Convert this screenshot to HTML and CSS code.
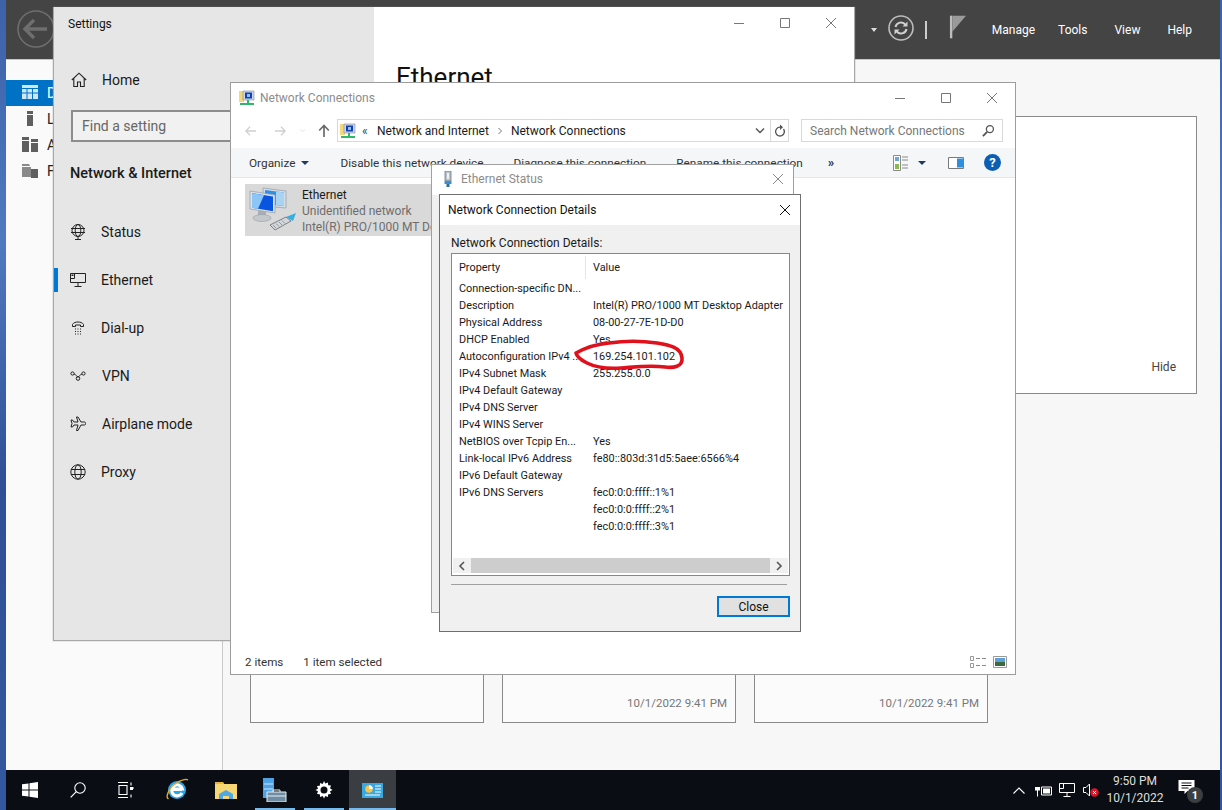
FILE: index.html
```html
<!DOCTYPE html>
<html lang="en">
<head>
<meta charset="utf-8">
<title>Network Connection Details</title>
<link rel="stylesheet" href="styles.css">
</head>
<body>
<div class="desktop">

  <section class="win sm">
    <header class="sm-head">
      <svg class="sm-back" viewBox="0 0 38 38"><circle cx="19" cy="19" r="18" fill="none" stroke="#6e6e6e" stroke-width="1.600"/><path d="M8 19h22M17 10l-9 9 9 9" fill="none" stroke="#6e6e6e" stroke-width="3.400"/></svg>
      <div class="sm-spacer"></div>
      <span class="sm-caret"></span>
      <svg class="sm-refresh" viewBox="0 0 26 26"><circle cx="13" cy="13" r="12" fill="none" stroke="#bdbdbd" stroke-width="1.600"/><path d="M7.500 12a5.600 5.600 0 0 1 10-2.200M18.500 14a5.600 5.600 0 0 1-10 2.200" fill="none" stroke="#d0d0d0" stroke-width="2"/><path d="M19.500 6.500v5h-5zM6.500 19.500v-5h5z" fill="#d0d0d0"/></svg>
      <span class="sm-divider"></span>
      <svg class="sm-flag" viewBox="0 0 18 24"><path d="M1 0h2.500v24H1z" fill="#bdbdbd"/><path d="M3.500 0H18L3.500 17z" fill="#9a9a9a"/></svg>
      <nav class="sm-menu"><span>Manage</span><span class="sm-tools">Tools</span><span>View</span><span>Help</span></nav>
    </header>
    <div class="sm-body">
      <aside class="sm-side">
        <div class="sm-item active">
          <svg viewBox="0 0 16 16"><path d="M0 0h16v3H0zM0 4h4.500v3.500H0zM5.500 4H10v3.500H5.500zM11 4h5v3.500h-5zM0 8.500h4.500V14H0zM5.500 8.500H10V14H5.500zM11 8.500h5V14h-5z" fill="#cfe6f7"/></svg><span>D</span>
        </div>
        <div class="sm-item"><svg viewBox="0 0 16 16"><path d="M5 0h6v3H5zM5 4h6v11H5z" fill="#5f5f5f"/></svg><span>L</span></div>
        <div class="sm-item"><svg viewBox="0 0 16 16"><path d="M0 0h7v3H0zM0 4h7v11H0zM9 2h7v3H9zM9 6h7v9H9z" fill="#5f5f5f"/></svg><span>A</span></div>
        <div class="sm-item"><svg viewBox="0 0 16 16"><path d="M0 1h7l1 2H0zM0 4h9v10H0z" fill="#8a8a8a"/><path d="M9 6h7v9H9z" fill="#5f5f5f"/></svg><span>F</span></div>
      </aside>
      <main class="sm-main">
        <div class="sm-panel"><span>Hide</span></div>
        <div class="sm-cards">
          <div class="sm-card"></div>
          <div class="sm-card"><span>10/1/2022 9:41 PM</span></div>
          <div class="sm-card"><span>10/1/2022 9:41 PM</span></div>
        </div>
      </main>
    </div>
  </section>

  <section class="win settings">
    <aside class="set-side">
      <div class="set-title">Settings</div>
      <div class="set-home">
        <svg class="set-ico" viewBox="0 0 16 16"><path d="M.8 8 8 1.200 15.200 8M2.800 6.500V14.500h3.700v-4.500h3v4.500h3.700V6.500" fill="none" stroke="#222" stroke-width="1.100"/></svg>
        <span>Home</span>
      </div>
      <div class="set-search">Find a setting</div>
      <div class="set-group">Network &amp; Internet</div>
      <ul class="set-list">
        <li><svg class="set-ico" viewBox="0 0 16 16"><g fill="none" stroke="#222" stroke-width="1"><circle cx="8" cy="6.500" r="6"/><ellipse cx="8" cy="6.500" rx="2.800" ry="6"/><path d="M1 4.500h14M1 8.500h14M8 12.500v3M5 15.500h6"/></g></svg><span>Status</span></li>
        <li class="cur"><svg class="set-ico" viewBox="0 0 16 16"><g fill="none" stroke="#222" stroke-width="1"><path d="M.5 1.500h15v9H.5zM8 10.500v4M4.500 14.500h7M.5 6.500h4v-5"/></g><path d="M1.500 2.500h2v1.500h-2z" fill="#222"/></svg><span>Ethernet</span></li>
        <li><svg class="set-ico" viewBox="0 0 16 16"><g fill="none" stroke="#222" stroke-width="1"><path d="M2.500 6.500V4.500C3.500 2.500 6 2 8 2s4.500.500 5.500 2.500v2h-3V5h-5v1.500z"/></g><path d="M5 8.500h1v1H5zM7.500 8.500h1v1h-1zM10 8.500h1v1h-1zM5 11h1v1H5zM7.500 11h1v1h-1zM10 11h1v1h-1zM5 13.500h1v1H5zM7.500 13.500h1v1h-1zM10 13.500h1v1h-1z" fill="#222"/></svg><span>Dial-up</span></li>
        <li><svg class="set-ico" viewBox="0 0 16 16"><g fill="none" stroke="#222" stroke-width="1"><circle cx="2.500" cy="5.500" r="1.600"/><circle cx="13.500" cy="5.500" r="1.600"/><circle cx="8" cy="10.500" r="1.800"/><path d="M4 6c2 0 2.500 3 4 3M12 6c-2 0-2.500 3-4 3"/></g></svg><span class="shift">VPN</span></li>
        <li><svg class="set-ico" viewBox="0 0 16 16"><path d="M6.500 1h1.500l3 5h3.500c1.500 0 1.500 3 0 3H11l-3 5.500H6.500L8 9H4l-1.500 2H1L2 7.500 1 4h1.500L4 6h4z" fill="none" stroke="#222" stroke-width="1"/></svg><span class="shift">Airplane mode</span></li>
        <li><svg class="set-ico" viewBox="0 0 16 16"><g fill="none" stroke="#222" stroke-width="1"><circle cx="8" cy="8" r="7.200"/><ellipse cx="8" cy="8" rx="3.200" ry="7.200"/><path d="M1.200 5.500h13.600M1.200 10.500h13.600"/></g></svg><span>Proxy</span></li>
      </ul>
    </aside>
    <div class="set-content">
      <div class="win-btns set-btns">
        <svg viewBox="0 0 12 12"><path d="M1 6.500h10" stroke="#777" fill="none"/></svg>
        <svg viewBox="0 0 12 12"><path d="M1.500 1.500h9v9h-9z" stroke="#777" fill="none"/></svg>
        <svg viewBox="0 0 12 12"><path d="M1 1l10 10M11 1 1 11" stroke="#777" fill="none"/></svg>
      </div>
      <h1 class="set-h1">Ethernet</h1>
    </div>
  </section>

  <section class="win netcon">
    <div class="nc-title">
      <svg class="ico16" viewBox="0 0 16 16"><path d="M0 1h7l1 1.500h-3V12H0z" fill="#f3d97a"/><path d="M4 1h11v9H4z" fill="#cfd8e6" stroke="#7c8794" stroke-width=".6"/><path d="M6 2.500h7v6H6z" fill="#123fb5"/><path d="M8 4h3v3H8z" fill="#8fc4f5"/><path d="M8 10h2v3H8zM1 13h14v2H1z" fill="#2fb86c"/></svg>
      <span>Network Connections</span>
      <div class="win-btns nc-btns">
        <svg viewBox="0 0 12 12"><path d="M1 6.500h10" stroke="#777" fill="none"/></svg>
        <svg viewBox="0 0 12 12"><path d="M1.500 1.500h9v9h-9z" stroke="#777" fill="none"/></svg>
        <svg viewBox="0 0 12 12"><path d="M1 1l10 10M11 1 1 11" stroke="#777" fill="none"/></svg>
      </div>
    </div>
    <div class="nc-addr">
      <svg class="nav-a" viewBox="0 0 14 12"><path d="M13 6H2M6.500 1.500 2 6l4.500 4.500" fill="none" stroke="#d0d0d0" stroke-width="1.400"/></svg>
      <svg class="nav-b" viewBox="0 0 14 12"><path d="M1 6h11M7.500 1.500 12 6l-4.500 4.500" fill="none" stroke="#d0d0d0" stroke-width="1.400"/></svg>
      <svg class="nav-c" viewBox="0 0 8 6"><path d="M1 1.500 4 4.500 7 1.500" fill="none" stroke="#dcdcdc" stroke-width="1"/></svg>
      <svg class="nav-d" viewBox="0 0 12 14"><path d="M6 13V2M1.200 6.500 6 1.500l4.800 5" fill="none" stroke="#6b6b6b" stroke-width="1.700"/></svg>
      <div class="addr-box">
        <svg class="ico16" viewBox="0 0 16 16"><path d="M0 1h7l1 1.500h-3V12H0z" fill="#f3d97a"/><path d="M4 1h11v9H4z" fill="#cfd8e6" stroke="#7c8794" stroke-width=".6"/><path d="M6 2.500h7v6H6z" fill="#123fb5"/><path d="M8 4h3v3H8z" fill="#8fc4f5"/><path d="M8 10h2v3H8zM1 13h14v2H1z" fill="#2fb86c"/></svg>
        <span class="crumb-more">«</span>
        <span>Network and Internet</span>
        <svg class="crumb-sep" viewBox="0 0 6 8"><path d="M1.500 1 4.500 4 1.500 7" fill="none" stroke="#777" stroke-width="1"/></svg>
        <span>Network Connections</span>
        <svg class="addr-drop" viewBox="0 0 10 7"><path d="M1 1.500 5 5.500 9 1.500" fill="none" stroke="#555" stroke-width="1.400"/></svg>
        <span class="addr-refresh"><svg viewBox="0 0 12 14"><path d="M9.500 5a4.400 4.400 0 1 1-3.500-1.800H8" fill="none" stroke="#555" stroke-width="1.300"/><path d="M6 .500v5.500L9 3.200z" fill="#555"/></svg></span>
      </div>
      <div class="search-box">
        <span>Search Network Connections</span>
        <svg viewBox="0 0 14 14"><circle cx="8.500" cy="5.500" r="3.800" fill="none" stroke="#555" stroke-width="1.400"/><path d="M5.500 8.500 1 13" stroke="#555" stroke-width="2"/></svg>
      </div>
    </div>
    <div class="nc-cmd">
      <span class="cmd-org">Organize<i class="caret"></i></span>
      <span class="cmd-a">Disable this network device</span>
      <span class="cmd-b">Diagnose this connection</span>
      <span class="cmd-c">Rename this connection</span>
      <span class="cmd-more">»</span>
      <div class="cmd-right">
        <svg class="cmd-view" viewBox="0 0 15 16"><path d="M.5.500h7v15h-7z" fill="#fff" stroke="#8a8a8a"/><path d="M2 2h4v4H2z" fill="#6fa6d8"/><path d="M2 9h4v5H2z" fill="#8cb84f"/><path d="M9 2h6M9 5h6M9 10h6M9 13h6" stroke="#8a8a8a"/></svg>
        <i class="caret navy"></i>
        <svg class="cmd-pane" viewBox="0 0 16 12"><path d="M.5.500h15v11H.500z" fill="#fff" stroke="#7a7a7a"/><path d="M9 1.500h6v9H9z" fill="#2e8fe0"/></svg>
        <span class="help">?</span>
      </div>
    </div>
    <div class="nc-files">
      <div class="file sel">
        <svg class="file-ico" viewBox="0 0 48 48">
          <path d="M14 2l23 3v17l-23-2z" fill="#d6dde4" stroke="#98a3ad" stroke-width=".8"/>
          <path d="M16 4l19 2.500v13.500l-19-2z" fill="#2f8fe8"/>
          <path d="M27 5.500l8 1v13.500l-8-1z" fill="#a9d3f5"/>
          <path d="M1 5l25 4v18L1 23z" fill="#dce2e8" stroke="#98a3ad" stroke-width=".8"/>
          <path d="M3 7.200l21 3.400v14.600L3 21.800z" fill="#0a55e0"/>
          <path d="M3 7.200l12 2-6 13.600-6-1z" fill="#8cc6f8"/>
          <path d="M9 25h8v5H9z" fill="#a8aeb4"/>
          <ellipse cx="13" cy="32" rx="9" ry="3.500" fill="#c3c8cd" stroke="#9aa0a6" stroke-width=".6"/>
          <path d="M21 39l16-8 5 4-16 9z" fill="#d4d8dc" stroke="#6f767c" stroke-width=".9"/>
          <path d="M24 39l3 3M27 37.500l3 3M30 36l3 3M33 34.500l3 3" stroke="#7d848a" stroke-width=".8"/>
          <path d="M37 31l10-4-3 8z" fill="#35aee2"/>
        </svg>
        <div class="file-text"><b>Ethernet</b><span>Unidentified network</span><span>Intel(R) PRO/1000 MT Desktop Adapter</span></div>
      </div>
    </div>
    <footer class="nc-status">
      <span>2 items</span><span class="sep-sel">1 item selected</span>
      <div class="status-ico">
        <svg viewBox="0 0 17 12"><path d="M.5.500h3v4h-3zM.5 7.500h3v4h-3z" fill="#fff" stroke="#999"/><path d="M6 2.500h4M12 2.500h4M6 9.500h4M12 9.500h4" stroke="#888"/></svg>
        <svg viewBox="0 0 14 12"><path d="M.5.500h13v11H.500z" fill="#fff" stroke="#999"/><path d="M2 2h10v4H2z" fill="#5d9fdb"/><path d="M2 6h10v4H2z" fill="#3c6a3e"/></svg>
      </div>
    </footer>
  </section>

  <section class="win status">
    <div class="st-title">
      <svg class="st-ico" viewBox="0 0 10 16"><path d="M2 0h6v10H2z" fill="#b8c2cc" stroke="#6d7780" stroke-width=".8"/><path d="M4 2h2v6H4z" fill="#eef2f5"/><path d="M1.500 10h7v3h-7z" fill="#3f8fd0"/><path d="M3.500 13h3v3h-3z" fill="#2b6ca3"/></svg>
      <span>Ethernet Status</span>
      <svg class="st-x" viewBox="0 0 12 12"><path d="M1 1l10 10M11 1 1 11" stroke="#888" fill="none"/></svg>
    </div>
  </section>

  <section class="win details">
    <div class="dt-title">
      <span>Network Connection Details</span>
      <svg viewBox="0 0 12 12"><path d="M1 1l10 10M11 1 1 11" stroke="#111" stroke-width="1" fill="none"/></svg>
    </div>
    <div class="dt-body">
      <div class="dt-label">Network Connection Details:</div>
      <div class="dt-list">
        <div class="dt-head"><span class="h-prop">Property</span><span class="h-val">Value</span></div>
        <div class="dt-rows">
          <div class="row"><span>Connection-specific DN...</span><span></span></div>
          <div class="row"><span>Description</span><span>Intel(R) PRO/1000 MT Desktop Adapter</span></div>
          <div class="row"><span>Physical Address</span><span>08-00-27-7E-1D-D0</span></div>
          <div class="row"><span>DHCP Enabled</span><span>Yes</span></div>
          <div class="row"><span>Autoconfiguration IPv4 ...</span><span>169.254.101.102</span></div>
          <div class="row"><span>IPv4 Subnet Mask</span><span>255.255.0.0</span></div>
          <div class="row"><span>IPv4 Default Gateway</span><span></span></div>
          <div class="row"><span>IPv4 DNS Server</span><span></span></div>
          <div class="row"><span>IPv4 WINS Server</span><span></span></div>
          <div class="row"><span>NetBIOS over Tcpip En...</span><span>Yes</span></div>
          <div class="row"><span>Link-local IPv6 Address</span><span>fe80::803d:31d5:5aee:6566%4</span></div>
          <div class="row"><span>IPv6 Default Gateway</span><span></span></div>
          <div class="row"><span>IPv6 DNS Servers</span><span>fec0:0:0:ffff::1%1</span></div>
          <div class="row"><span></span><span>fec0:0:0:ffff::2%1</span></div>
          <div class="row"><span></span><span>fec0:0:0:ffff::3%1</span></div>
        </div>
        <div class="dt-scroll">
          <svg viewBox="0 0 8 10"><path d="M6 1 2 5l4 4" fill="none" stroke="#555" stroke-width="1.600"/></svg>
          <span class="thumb"></span>
          <svg viewBox="0 0 8 10"><path d="M2 1l4 4-4 4" fill="none" stroke="#555" stroke-width="1.600"/></svg>
        </div>
      </div>
      <hr class="dt-rule">
      <div class="dt-actions"><button class="dt-close" type="button">Close</button></div>
    </div>
  </section>

  <svg class="ink" viewBox="0 0 120 40"><path d="M3 16C12 11 24 7 36 6 50 4 70 4 84 6 96 8 108 10 109 21 110 30 100 31 92 30 76 28 62 30 48 31 34 32 22 30 14 26 8 23 4 20 3 16" fill="none" stroke="#e0101c" stroke-width="3.600" stroke-linecap="round"/></svg>

  <footer class="taskbar">
    <svg class="tb-start" viewBox="0 0 16 16"><path d="M0 2.300 6.500 1.400v6.100H0zM7.500 1.200 16 0v7.500H7.500zM0 8.500h6.500v6.100L0 13.700zM7.500 8.500H16V16l-8.500-1.200z" fill="#fff"/></svg>
    <svg class="tb-search" viewBox="0 0 16 16"><circle cx="10" cy="6" r="5.200" fill="none" stroke="#fff" stroke-width="1.100"/><path d="M6.300 9.700.7 15.300" stroke="#fff" stroke-width="1.200"/></svg>
    <svg class="tb-task" viewBox="0 0 16 16"><path d="M0 .500h10M0 15.500h10M1 3.500h8v9H1zM13 .500v3M13 6h3M13 12.500v3" fill="none" stroke="#fff" stroke-width="1.100"/><path d="M12 5h3v3h-3z" fill="#fff"/></svg>
    <svg class="tb-ie" viewBox="0 0 24 24"><circle cx="12" cy="12" r="9" fill="#2ba4e6"/><path d="M8 11.500h9M17 15a5.500 5.500 0 1 1 .5-4H7.500" fill="none" stroke="#fff" stroke-width="3"/><path d="M3.500 21C0 19 4 9 13 4c4-2 8-3.500 10-2" fill="none" stroke="#e0a92c" stroke-width="1.400"/></svg>
    <svg class="tb-folder" viewBox="0 0 22 18"><path d="M0 1h8l1 2h13v15H0z" fill="#f7d774"/><path d="M0 1h8l1 2H0z" fill="#e3b53c"/><path d="M4 18v-5l7-4 7 4v5h-4v-3H8v3z" fill="#4fa8e2"/></svg>
    <svg class="tb-sm" viewBox="0 0 24 24"><path d="M0 0h11v20H0z" fill="#4da3e6"/><path d="M1 6h9M1 11h9" stroke="#cfe7f8"/><path d="M4 14h19v10H4z" fill="#6f8ea5" stroke="#e6eef3"/><path d="M10 14v-2h7v2" fill="none" stroke="#e6eef3"/><path d="M4 18h19" stroke="#e6eef3"/></svg>
    <svg class="tb-gear" viewBox="0 0 18 18"><path d="M9 0l1.300 2.500 2.600-1 .3 2.800 2.800.3-1 2.600L17.500 9 15 10.300l1 2.600-2.800.3-.3 2.800-2.600-1L9 17.500 7.700 15l-2.600 1-.3-2.800L2 12.900l1-2.600L.5 9 3 7.700 2 5.100l2.800-.3.3-2.800 2.600 1z" fill="#fff"/><circle cx="9" cy="9" r="3.500" fill="#0a0e14"/></svg>
    <div class="tb-active">
      <svg viewBox="0 0 21 15"><path d="M0 0h21v15H0z" fill="#39a7e0"/><circle cx="7" cy="6" r="3.800" fill="#f7c34a"/><path d="M7 6V2.200A3.800 3.800 0 0 1 10.800 6z" fill="#fff"/><path d="M13 3h6M13 6h6M13 9h6M3 12h15" stroke="#fff"/></svg>
    </div>
    <span class="tb-under u1"></span><span class="tb-under u2"></span><span class="tb-under u3"></span>
    <div class="tray">
      <svg class="t-up" viewBox="0 0 12 7"><path d="M.5 6.500 6 1l5.500 5.500" fill="none" stroke="#fff" stroke-width="1.100"/></svg>
      <svg class="t-pow" viewBox="0 0 17 13"><path d="M6.500 3h10v8h-10z" fill="none" stroke="#fff"/><path d="M8 4.500h7v5H8zM3.500 0v3M1 0v3M0 3h5v3.500H3v6H2v-6H0z" fill="#fff"/></svg>
      <svg class="t-net" viewBox="0 0 16 14"><path d="M.5.500h15v9H.5zM8 9.500v4M4.500 13.500h7M.5 5.500h4v-5" fill="none" stroke="#fff"/></svg>
      <svg class="t-vol" viewBox="0 0 16 14"><path d="M.5 4.500h2.500L6.500 1v12L3 9.500H.5z" fill="none" stroke="#fff"/><circle cx="11.500" cy="9.500" r="4.200" fill="#e81123"/><path d="M10 8l3 3M13 8l-3 3" stroke="#fff"/></svg>
      <div class="clock"><span>9:50 PM</span><span>10/1/2022</span></div>
      <div class="notif">
        <svg viewBox="0 0 16 14"><path d="M0 0h16v11H9l-3 3v-3H0z" fill="#fff"/><path d="M3 3h10M3 5.500h10M3 8h7" stroke="#0a0e14"/></svg>
        <span class="badge">1</span>
      </div>
    </div>
  </footer>
</div>
</body>
</html>
```
FILE: styles.css
```css
* { box-sizing: border-box; }
html, body { margin: 0; height: 100%; }
body { font-family: Roboto, "Noto Sans", sans-serif; font-size: 12px; color: #1a1a1a; overflow: hidden; }
svg { display: block; flex: none; }
.desktop { position: relative; width: 1222px; height: 810px; overflow: hidden; background: linear-gradient(180deg, #3c62a8 0%, #5079c0 30%, #2f4f96 60%, #34589f 100%); }
.win { position: absolute; }

/* Server Manager */
.sm { left: 6px; top: 0; width: 1214px; height: 770px; display: flex; flex-direction: column; background: #f7f7f7; }
.sm-head { height: 60px; flex: none; background: #444; border-bottom: 1px solid #c8c8c8; display: flex; align-items: center; padding-left: 11px; color: #fff; }
.sm-back { width: 38px; height: 38px; margin-top: -1px; }
.sm-spacer { flex: 1; }
.sm-caret { width: 0; height: 0; border: 3.500px solid transparent; border-top: 4px solid #ddd; border-bottom: 0; margin-right: 11px; }
.sm-refresh { width: 26px; height: 26px; margin-top: -3px; }
.sm-divider { width: 1.500px; height: 18px; background: #ccc; margin: 0 22px 0 11px; }
.sm-flag { width: 17px; height: 24px; margin-top: -6px; margin-right: 26px; }
.sm-menu { display: flex; gap: 27px; padding-right: 28px; font-size: 12px; }
.sm-tools { margin-left: -4px; }
.sm-body { flex: 1; display: flex; min-height: 0; }
.sm-side { width: 217px; flex: none; background: #fafafa; border-right: 1px solid #c9c9c9; padding-top: 20px; }
.sm-item { height: 26px; display: flex; align-items: center; gap: 9px; padding-left: 16px; color: #222; font-size: 14px; white-space: nowrap; }
.sm-item svg { width: 16px; height: 16px; }
.sm-item.active { background: #0072c6; color: #fff; }
.sm-main { flex: 1; position: relative; padding: 56px 23px 0 27px; }
.sm-panel { height: 278px; background: #fff; border: 1px solid #8a8a8a; display: flex; align-items: flex-end; justify-content: flex-end; padding: 0 20px 19px 0; color: #444; }
.sm-cards { display: flex; gap: 18px; margin-top: 27px; }
.sm-card { width: 234px; height: 302px; background: #fbfbfb; border: 1px solid #8a8a8a; display: flex; align-items: flex-end; justify-content: flex-end; padding: 0 8px 12px 0; color: #777; font-size: 11.500px; }

/* Settings */
.settings { left: 53px; top: 7px; width: 802px; height: 634px; display: flex; border: 1px solid #a8a8a8; border-width: 0 1px 1px 1px; box-shadow: 0 0 1px #888; }
.set-side { width: 320px; flex: none; background: #e6e6e6; padding: 0 0 0 14px; }
.set-title { height: 34px; display: flex; align-items: center; font-size: 12px; color: #111; }
.set-home { display: flex; align-items: center; gap: 15px; height: 46px; margin-top: 16px; margin-left: 3px; font-size: 14px; }
.set-ico { width: 16px; height: 16px; }
.set-search { width: 300px; height: 32px; margin-top: 7px; margin-left: 3px; border: 2px solid #8d8d8d; background: #f1f1f1; color: #666; font-size: 14px; display: flex; align-items: center; padding-left: 9px; }
.set-group { margin-top: 20px; margin-left: 2px; height: 22px; font-weight: 500; font-size: 14.500px; display: flex; align-items: center; }
.set-list { list-style: none; margin: 24px 0 0 -14px; padding: 0; }
.set-list li { height: 48px; display: flex; align-items: center; gap: 15px; padding-left: 16px; font-size: 14px; position: relative; }
.set-list li.cur::before { content: ""; position: absolute; left: 0; top: 12px; width: 4px; height: 24px; background: #0078d7; }
.set-list .shift { margin-left: 1px; }
.set-content { flex: 1; background: #fff; padding-left: 22px; position: relative; }
.win-btns { display: flex; }
.win-btns svg { width: 12px; height: 12px; }
.set-btns { justify-content: flex-end; gap: 34px; padding: 10px 17px 0 0; }
.set-h1 { margin: 32px 0 0; font-weight: 400; font-size: 26px; line-height: 32px; color: #111; }

/* Network Connections */
.netcon { left: 230px; top: 82px; width: 786px; height: 593px; background: #fff; border: 1px solid #9c9c9c; display: flex; flex-direction: column; }
.ico16 { width: 16px; height: 16px; }
.nc-title { height: 29px; flex: none; display: flex; align-items: center; gap: 5px; padding-left: 8px; color: #8c8c8c; }
.nc-btns { margin-left: auto; gap: 34px; padding-right: 17px; }
.nc-addr { height: 36px; flex: none; display: flex; align-items: center; padding-left: 13px; padding-top: 1px; }
.nav-a { width: 13px; height: 12px; }
.nav-b { width: 13px; height: 12px; margin-left: 17px; }
.nav-c { width: 7px; height: 5px; margin-left: 12px; }
.nav-d { width: 12px; height: 14px; margin-left: 12px; }
.addr-box { width: 452px; height: 23px; margin-left: 7px; border: 1px solid #d9d9d9; display: flex; align-items: center; padding-left: 2px; color: #1a1a1a; position: relative; }
.crumb-more { width: 12px; margin: 0 3px 0 6px; font-size: 12px; color: #444; }
.crumb-sep { width: 6px; height: 8px; margin: 0 8px; }
.addr-drop { width: 10px; height: 7px; margin-left: auto; margin-right: 23px; }
.addr-refresh { position: absolute; right: 0; top: 0; bottom: 0; width: 18px; border-left: 1px solid #d9d9d9; display: flex; align-items: center; justify-content: center; }
.addr-refresh svg { width: 12px; height: 14px; }
.search-box { width: 202px; height: 23px; margin-left: 12px; border: 1px solid #d9d9d9; display: flex; align-items: center; justify-content: space-between; padding: 0 7px 0 8px; color: #777; }
.search-box svg { width: 13px; height: 13px; }
.nc-cmd { height: 30px; flex: none; background: #f5f6f7; border-bottom: 1px solid #e6e6e6; display: flex; align-items: center; color: #333; position: relative; white-space: nowrap; font-size: 11.800px; }
.cmd-org { margin-left: 18px; display: flex; align-items: center; }
.caret { display: inline-block; width: 0; height: 0; border: 4px solid transparent; border-top: 4px solid #1f3a5c; border-bottom: 0; margin-left: 6px; }
.cmd-a { margin-left: 31px; }
.cmd-b { margin-left: 30px; }
.cmd-c { margin-left: 30px; }
.cmd-more { margin-left: 25px; font-weight: 700; font-size: 13px; }
.cmd-right { margin-left: auto; display: flex; align-items: center; padding-right: 14px; }
.cmd-view { width: 15px; height: 16px; }
.navy { margin-left: 10px; }
.cmd-pane { width: 16px; height: 12px; margin-left: 22px; }
.help { width: 17px; height: 17px; margin-left: 20px; border-radius: 50%; background: #0a5fb5; color: #fff; font-weight: 700; font-size: 13px; display: flex; align-items: center; justify-content: center; }
.nc-files { flex: 1; padding: 6px 0 0 14px; }
.file { width: 300px; height: 52px; display: flex; align-items: center; gap: 5px; padding-left: 4px; white-space: nowrap; overflow: hidden; }
.file.sel { background: #d9d9d9; }
.file-ico { width: 48px; height: 48px; }
.file-text { display: flex; flex-direction: column; line-height: 16px; color: #6d6d6d; padding-top: 2px; }
.file-text b { font-weight: 400; color: #1a1a1a; }
.nc-status { height: 24px; flex: none; display: flex; align-items: center; padding: 0 8px 0 14px; color: #333; font-size: 11.600px; }
.sep-sel { margin-left: 20px; }
.status-ico { margin-left: auto; display: flex; gap: 6px; }
.status-ico svg:first-child { width: 17px; height: 12px; }
.status-ico svg:last-child { width: 14px; height: 12px; }

/* Ethernet Status */
.status { left: 431px; top: 164px; width: 363px; height: 449px; background: #f0f0f0; border: 1px solid #a0a0a0; }
.st-title { height: 30px; background: #fff; display: flex; align-items: center; gap: 8px; padding: 0 0 2px 11px; color: #8c8c8c; }
.st-ico { width: 10px; height: 16px; }
.st-x { width: 12px; height: 12px; margin-left: auto; margin-right: 9px; }

/* Details */
.details { left: 439px; top: 194px; width: 362px; height: 438px; border: 1px solid #6f6f6f; background: #f0f0f0; display: flex; flex-direction: column; }
.dt-title { height: 30px; flex: none; background: #fff; display: flex; align-items: center; justify-content: space-between; padding: 0 9px 0 8px; color: #111; }
.dt-title svg { width: 12px; height: 12px; }
.dt-body { flex: 1; padding: 9px 10px 0 11px; }
.dt-label { height: 18px; display: flex; align-items: center; }
.dt-list { height: 323px; margin-top: 1px; background: #fff; border: 1px solid #828790; display: flex; flex-direction: column; font-size: 10.900px; }
.dt-head { height: 26px; flex: none; display: flex; align-items: center; position: relative; }
.h-prop { width: 134px; padding-left: 7px; height: 23px; display: flex; align-items: center; border-right: 1px solid #e5e5e5; }
.h-val { padding-left: 7px; }
.dt-rows { flex: 1; white-space: nowrap; overflow: hidden; }
.row { height: 17px; display: flex; align-items: center; }
.row span:first-child { width: 141px; padding-left: 7px; flex: none; }
.dt-scroll { height: 15px; flex: none; background: #f0f0f0; display: flex; align-items: center; justify-content: space-between; padding: 0 5px; margin: 0 1px 2px; }
.dt-scroll svg { width: 8px; height: 10px; }
.thumb { width: 299px; height: 15px; background: #cdcdcd; }
.dt-rule { margin: 8px 3px 0 0; border: 0; border-top: 1px solid #a0a0a0; }
.dt-actions { display: flex; justify-content: flex-end; margin-top: 11px; }
.dt-close { width: 73px; height: 21px; border: 2px solid #0078d7; background: #e1e1e1; font: inherit; color: #111; padding: 0; }

/* Ink */
.ink { position: absolute; left: 573px; top: 337px; width: 120px; height: 40px; }

/* Taskbar */
.taskbar { position: absolute; left: 6px; top: 770px; width: 1214px; height: 40px; background: #0a0e14; display: flex; align-items: center; color: #fff; }
.tb-start { width: 16px; height: 16px; margin-left: 16px; }
.tb-search { width: 16px; height: 16px; margin-left: 32px; }
.tb-task { width: 16px; height: 16px; margin-left: 32px; }
.tb-ie { width: 24px; height: 24px; margin-left: 31px; }
.tb-folder { width: 22px; height: 18px; margin-left: 26px; }
.tb-sm { width: 24px; height: 24px; margin-left: 26px; }
.tb-gear { width: 18px; height: 18px; margin-left: 28px; }
.tb-active { width: 47px; height: 40px; margin-left: 16px; background: #3a3e42; display: flex; align-items: center; justify-content: center; }
.tb-active svg { width: 21px; height: 15px; }
.tb-under { position: absolute; bottom: 0; height: 2px; background: #76b9ed; }
.u1 { left: 249px; width: 40px; }
.u2 { left: 298px; width: 40px; }
.u3 { left: 343px; width: 47px; }
.tray { margin-left: auto; display: flex; align-items: center; }
.t-up { width: 12px; height: 7px; }
.t-pow { width: 17px; height: 13px; margin-left: 10px; }
.t-net { width: 16px; height: 14px; margin-left: 7px; }
.t-vol { width: 16px; height: 14px; margin-left: 8px; }
.clock { width: 72px; display: flex; flex-direction: column; align-items: center; line-height: 17px; font-size: 12px; color: #ddd; }
.notif { position: relative; width: 17px; height: 14px; margin: -6px 25px 0 7px; }
.notif svg { width: 17px; height: 14px; }
.badge { position: absolute; left: 9px; top: 7px; width: 16px; height: 16px; border-radius: 50%; background: #3c3f42; color: #fff; font-size: 11px; font-weight: 700; display: flex; align-items: center; justify-content: center; }
```
